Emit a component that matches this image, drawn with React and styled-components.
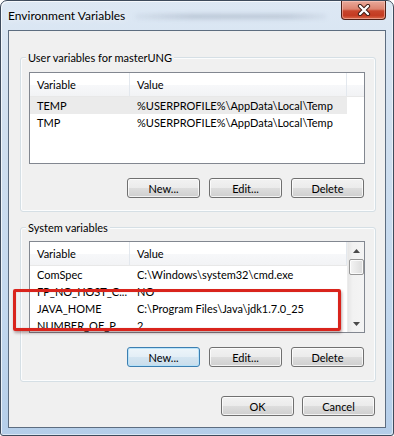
import React from "react";
import { styled, createGlobalStyle } from "styled-components";

const GlobalStyle = createGlobalStyle`
  html, body {
    margin: 0;
    padding: 0;
    background: #ffffff;
  }
  * {
    box-sizing: border-box;
  }
`;

const Window = styled.div`
  position: relative;
  width: 394px;
  height: 436px;
  display: flex;
  flex-direction: column;
  border: 1px solid #3e4b5c;
  border-radius: 7px 7px 3px 3px;
  background: linear-gradient(180deg, #dde8f4 0%, #d0dfef 30%, #c3d8ee 70%, #b5cee9 100%);
  box-shadow: inset 1px 1px 0 rgba(255, 255, 255, 0.7), inset -1px -1px 0 rgba(255, 255, 255, 0.5);
  font-family: Lato, "Noto Sans", sans-serif;
  font-size: 11px;
  color: #000;
  overflow: hidden;
`;

const TitleBar = styled.div`
  height: 29px;
  display: flex;
  align-items: flex-start;
  padding-left: 7px;
`;

const Title = styled.div`
  margin-top: 7px;
  font-size: 12px;
  line-height: 15px;
  color: #000;
  text-shadow: 0 0 6px rgba(255, 255, 255, 0.9);
`;

/* blurred window seen through the glass */
const GlassSmear = styled.div`
  flex: 1;
  height: 5px;
  margin: 13px 14px 0 10px;
  border-radius: 3px;
  background: linear-gradient(90deg, rgba(70, 85, 110, 0.05), rgba(70, 85, 110, 0.22) 30%, rgba(70, 85, 110, 0.2) 80%, rgba(70, 85, 110, 0.05));
  filter: blur(2px);
`;

const CloseButton = styled.div`
  width: 45px;
  height: 19px;
  margin-right: 7px;
  display: flex;
  align-items: center;
  justify-content: center;
  border: 1px solid #4f2016;
  border-top: none;
  border-radius: 0 0 4px 4px;
  background: linear-gradient(180deg, #e9a99a 0%, #dd8470 45%, #c8462c 55%, #c43b22 80%, #d86a4a 100%);
  box-shadow: inset 0 0 0 1px rgba(255, 210, 200, 0.5);
`;

const Client = styled.div`
  flex: 1;
  margin: 0 7px 7px 7px;
  border: 1px solid #5d6d80;
  background: #f0f0f0;
  padding: 0 9px 0 11px;
  display: flex;
  flex-direction: column;
`;

const GroupBox = styled.div`
  position: relative;
  margin-top: ${(p) => p.$top}px;
  border: 1px solid #d5dfe5;
  border-radius: 3px;
  box-shadow: inset 0 0 0 1px #fbfcfd;
  padding: ${(p) => p.$padTop}px 10px ${(p) => p.$padBottom}px 8px;
`;

const Legend = styled.div`
  position: absolute;
  top: -8px;
  left: 5px;
  padding: 0 2px;
  background: #f0f0f0;
  line-height: 15px;
`;

const ListView = styled.div`
  height: 92px;
  border: 1px solid #828790;
  background: #ffffff;
  display: flex;
  overflow: hidden;
`;

const ListBody = styled.div`
  flex: 1;
  min-width: 0;
  display: flex;
  flex-direction: column;
  overflow: hidden;
`;

const Header = styled.div`
  height: 24px;
  flex-shrink: 0;
  display: flex;
  background: linear-gradient(180deg, #ffffff 0%, #ffffff 50%, #f7f8fa 51%, #f2f3f5 100%);
  border-bottom: 1px solid #e8e8e8;
`;

const HeaderCell = styled.div`
  width: ${(p) => p.$w}px;
  flex-shrink: 0;
  padding-left: 7px;
  line-height: 23px;
  border-right: 1px solid #e3e8ee;
`;

const HeaderFill = styled.div`
  flex: 1;
`;

const Row = styled.div`
  height: 17px;
  flex-shrink: 0;
  display: flex;
  width: 317px;
  background: ${(p) => (p.$selected ? "#ebebeb" : "transparent")};
`;

const Cell = styled.div`
  width: ${(p) => p.$w}px;
  flex-shrink: 0;
  padding-left: 7px;
  line-height: 17px;
  white-space: nowrap;
  overflow: hidden;
`;

const ScrollBar = styled.div`
  width: 17px;
  flex-shrink: 0;
  display: flex;
  flex-direction: column;
  align-items: center;
  background: linear-gradient(90deg, #e6e6e6 0%, #f2f2f2 30%, #f4f4f4 100%);
  border-left: 1px solid #ececec;
`;

const ArrowBox = styled.div`
  width: 17px;
  height: 17px;
  display: flex;
  align-items: center;
  justify-content: center;
  margin-top: ${(p) => (p.$down ? "auto" : "0")};
`;

const Thumb = styled.div`
  width: 15px;
  height: 16px;
  border: 1px solid #979797;
  border-radius: 2px;
  background: linear-gradient(90deg, #f4f4f4 0%, #e8e8e8 50%, #dcdcdc 100%);
  box-shadow: inset 0 0 0 1px rgba(255, 255, 255, 0.8);
`;

const ButtonRow = styled.div`
  display: flex;
  justify-content: flex-end;
  gap: ${(p) => p.$gap}px;
  margin-top: ${(p) => p.$top}px;
  padding-right: ${(p) => p.$right}px;
`;

const Button = styled.div`
  width: 73px;
  height: 20px;
  display: flex;
  align-items: center;
  justify-content: center;
  border: 1px solid ${(p) => (p.$focused ? "#3c7fb1" : "#707070")};
  border-radius: 3px;
  background: ${(p) =>
    p.$focused
      ? "linear-gradient(180deg, #edf5fa 0%, #e3eef6 50%, #d4e5f1 51%, #c9ddeb 100%)"
      : "linear-gradient(180deg, #f2f2f2 0%, #ebebeb 50%, #dddddd 51%, #cfcfcf 100%)"};
  box-shadow: inset 0 0 0 1px ${(p) => (p.$focused ? "rgba(180, 225, 250, 0.9)" : "rgba(255, 255, 255, 0.75)")};
  line-height: 15px;
`;

const Highlight = styled.div`
  position: absolute;
  left: 12px;
  top: 288px;
  width: 328px;
  height: 42px;
  border: 3px solid #d9241c;
  border-radius: 2px;
  box-shadow: 1px 2px 3px rgba(60, 0, 0, 0.35), inset 0 0 1px rgba(120, 0, 0, 0.4);
  pointer-events: none;
`;

const userVars = [
  { name: "TEMP", value: "%USERPROFILE%\\AppData\\Local\\Temp", selected: true },
  { name: "TMP", value: "%USERPROFILE%\\AppData\\Local\\Temp" },
];

const systemVars = [
  { name: "ComSpec", value: "C:\\Windows\\system32\\cmd.exe" },
  { name: "FP_NO_HOST_C...", value: "NO" },
  { name: "JAVA_HOME", value: "C:\\Program Files\\Java\\jdk1.7.0_25" },
  { name: "NUMBER_OF_P...", value: "2" },
];

const CloseIcon = () => (
  <svg width="14" height="12" viewBox="0 0 14 12">
    <path d="M3 2 L11 10 M11 2 L3 10" stroke="#3a1a12" strokeWidth="4.2" strokeLinecap="round" />
    <path d="M3 2 L11 10 M11 2 L3 10" stroke="#ffffff" strokeWidth="2.4" strokeLinecap="round" />
  </svg>
);

const Arrow = ({ down }) => (
  <svg width="7" height="4" viewBox="0 0 7 4">
    <path d={down ? "M0 0 L7 0 L3.5 4 Z" : "M0 4 L7 4 L3.5 0 Z"} fill="#4a4a4a" />
  </svg>
);

const VarList = ({ rows, scroll }) => (
  <ListView>
    <ListBody>
      <Header>
        <HeaderCell $w={100}>Variable</HeaderCell>
        <HeaderCell $w={217}>Value</HeaderCell>
        <HeaderFill />
      </Header>
      {rows.map((r) => (
        <Row key={r.name} $selected={r.selected}>
          <Cell $w={100}>{r.name}</Cell>
          <Cell $w={217}>{r.value}</Cell>
        </Row>
      ))}
    </ListBody>
    {scroll && (
      <ScrollBar>
        <ArrowBox>
          <Arrow />
        </ArrowBox>
        <Thumb />
        <ArrowBox $down>
          <Arrow down />
        </ArrowBox>
      </ScrollBar>
    )}
  </ListView>
);

const App = () => {
  return (
    <>
      <GlobalStyle />
      <Window>
        <TitleBar>
          <Title>Environment Variables</Title>
          <GlassSmear />
          <CloseButton>
            <CloseIcon />
          </CloseButton>
        </TitleBar>
        <Client>
          <GroupBox $top={26} $padTop={14} $padBottom={13}>
            <Legend>User variables for masterUNG</Legend>
            <VarList rows={userVars} />
            <ButtonRow $top={14} $right={1} $gap={9}>
              <Button>New...</Button>
              <Button>Edit...</Button>
              <Button>Delete</Button>
            </ButtonRow>
          </GroupBox>
          <GroupBox $top={15} $padTop={13} $padBottom={14}>
            <Legend>System variables</Legend>
            <VarList rows={systemVars} scroll />
            <ButtonRow $top={14} $right={1} $gap={9}>
              <Button $focused>New...</Button>
              <Button>Edit...</Button>
              <Button>Delete</Button>
            </ButtonRow>
          </GroupBox>
          <ButtonRow $top={14} $right={1} $gap={8}>
            <Button>OK</Button>
            <Button>Cancel</Button>
          </ButtonRow>
        </Client>
        <Highlight />
      </Window>
    </>
  );
};

export default App;
